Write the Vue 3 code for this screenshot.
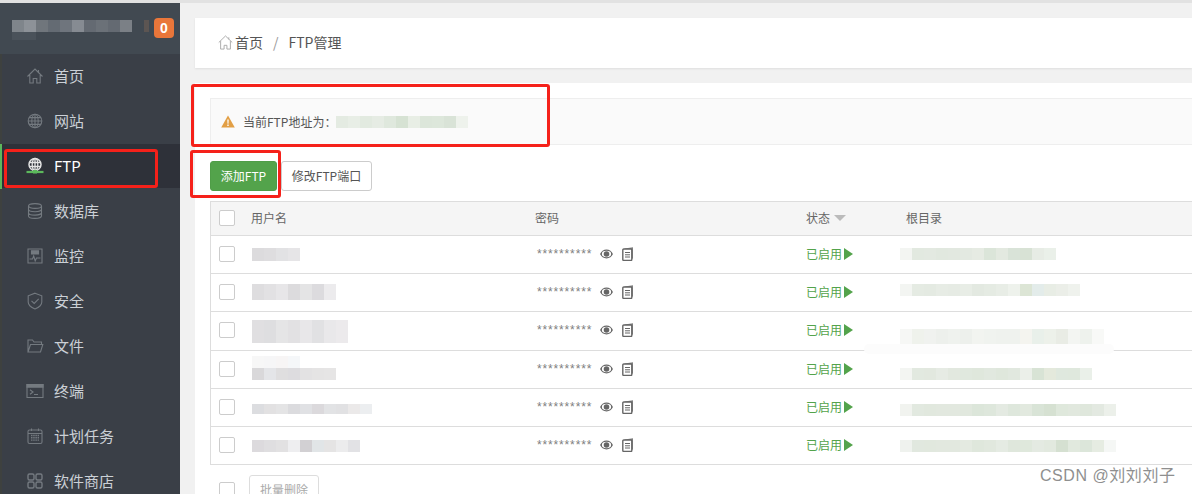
<script setup>
const navItems = [
  { name: '首页', icon: 'home' },
  { name: '网站', icon: 'globe' },
  { name: 'FTP', icon: 'ftp', active: true },
  { name: '数据库', icon: 'db' },
  { name: '监控', icon: 'monitor' },
  { name: '安全', icon: 'shield' },
  { name: '文件', icon: 'folder' },
  { name: '终端', icon: 'terminal' },
  { name: '计划任务', icon: 'calendar' },
  { name: '软件商店', icon: 'apps' },
]
const brandCells = ['#7f858b', '#8d9298', '#70767c', '#646b73', '#6f757d', '#868b92', '#646a72', '#6b7178', '#646a72', '#7b8086']
const addressCells = ['#e4ebe2', '#e8eee6', '#e2eae0', '#e6ece4', '#dfe8dd', '#d6e2d3', '#e8eee5', '#dce6da', '#dde7db', '#d9e3d7', '#eef2ec']
const rows = [
  {
    h: 38, pad: 2, nameTop: 12, nameH: 13, pathTop: 12, pathH: 12,
    name: ['#dcdbdd', '#dedddf', '#e2e2e4', '#e6e5e7'],
    path: ['#f3f5f2', '#e2e9e0', '#e3e9e1', '#e1e8df', '#e2e8e0', '#e3e9e1', '#e6ebe3', '#dbe5d9', '#e3e9e0', '#d9e3d8', '#d8e2d5', '#e7ece5', '#eaf0e9'],
  },
  {
    h: 38, pad: 2, nameTop: 10, nameH: 16, pathTop: 10, pathH: 12,
    name: ['#dedddf', '#e2e1e3', '#e7e6e8', '#dcdbdd', '#e4e4e5', '#dcdbde', '#ecebed'],
    path: ['#f3f5f2', '#e5ebe3', '#e4eae2', '#e7ece5', '#e6ebe4', '#e8ede6', '#e3e9e1', '#e5ebe3', '#e8ede6', '#eef2ec', '#dce5d5', '#e3ecea', '#e8ede5', '#ebeee8', '#eff2ed'],
  },
  {
    h: 39, pad: 3, nameTop: 8, nameH: 23, pathTop: 17, pathH: 15,
    name: ['#e0dfe1', '#dedee0', '#e5e5e6', '#e2e1e3', '#e8e7e9', '#e1e1e3', '#e9e8ea', '#eceaec'],
    path: ['#f6f7f5', '#eff2ec', '#f0f2ef', '#edf0ec', '#eff2ee', '#edf0ec', '#f2f4f0', '#f0f3ef', '#eff2ee', '#eff2ee', '#f4f4ef', '#e9f0ea', '#edf1ea', '#e9ece5', '#f3f5f2', '#eef2ed', '#f8f9f7'],
  },
  {
    h: 38, pad: 2, nameTop: 5, nameH: 12, pathTop: 17, pathH: 12,
    ghost: ['#f7f7f7', '#f6f6f7', '#f7f5f5', '#f5f7f9'],
    name: ['#d9d8da', '#e4e5e8', '#dfdedf', '#dddcdf', '#e3e2e3', '#e5e4e4', '#e6e5e5'],
    path: ['#f3f5f2', '#e2e9e0', '#e2e8df', '#e6ebe4', '#e2e8df', '#e0e8de', '#dfe7dc', '#e1e8df', '#dfe7dc', '#e1e8df', '#ebefe9', '#d8e3d5', '#e4e9dc', '#dfe8de', '#dfe8dd', '#eaf0e9'],
  },
  {
    h: 38, pad: 2, nameTop: 15, nameH: 10, pathTop: 15, pathH: 12,
    name: ['#dcdde0', '#e2e1e2', '#e4e4e5', '#dbdbde', '#e0e1e4', '#dbd9dc', '#e2e3e5', '#e1e1e3', '#ebe9e9', '#eceef0'],
    path: ['#f1f3ef', '#e2e9e0', '#e1e8de', '#e2e8df', '#e2e8df', '#e1e8de', '#dce6da', '#dee7dc', '#e4eae2', '#dee7dc', '#e2e9df', '#d9e4d7', '#d6e1d2', '#dfe8dc', '#e1e8de', '#dfe7dc', '#e3e9e1', '#ecf0ea'],
  },
  {
    h: 38, pad: 2, nameTop: 13, nameH: 12, pathTop: 13, pathH: 12,
    name: ['#dcdadd', '#dfdee0', '#e2e1e2', '#eeeef0', '#d2d0d3', '#e1e5e7', '#e5e4e4', '#ececed', '#e2e2e5'],
    path: ['#eff2ee', '#e1e8df', '#e1e8de', '#e2e8df', '#e2e8df', '#e4eae1', '#dfe7dc', '#e1e8de', '#e5ebe3', '#dfe7dc', '#dfe8dc', '#e4eae2', '#e2e9df', '#d5e0d1', '#e1e9de', '#dce6da', '#e6ece2', '#f5f7f5'],
  },
]
</script>

<template>
  <div class="page">
    <aside class="sidebar">
      <div class="brand">
        <div class="brand-blur">
          <div class="brand-cells">
            <i v-for="(c, i) in brandCells" :key="i" :style="{ background: c }"></i>
          </div>
          <div class="brand-under"></div>
        </div>
        <i class="brand-tail"></i>
        <span class="badge">0</span>
      </div>
      <nav class="nav">
        <a v-for="item in navItems" :key="item.name" class="nav-item" :class="{ active: item.active }">
          <svg class="nav-icon" viewBox="0 0 18 18" fill="none" stroke="currentColor" stroke-width="1.1">
            <template v-if="item.icon === 'home'">
              <path d="M1.500 9.500 9 2l7.500 7.500M3.800 8v8h3.400v-4.500h3.600V16h3.400V8M12.500 3v2.800" />
            </template>
            <template v-else-if="item.icon === 'globe'">
              <circle cx="9" cy="9" r="6.800" />
              <ellipse cx="9" cy="9" rx="3.200" ry="6.800" />
              <path d="M9 2.200v13.600M2.200 9h13.600M3 5.600h12M3 12.400h12" />
            </template>
            <template v-else-if="item.icon === 'ftp'">
              <g stroke="#e4e4e4" stroke-width="1.300">
                <circle cx="9" cy="7.500" r="6" stroke-width="1.500" />
                <ellipse cx="9" cy="7.500" rx="2.800" ry="6" />
                <path d="M9 1.500v12M3 5.500h12M3 9.500h12" />
              </g>
              <path d="M.5 15h17" stroke="#5cb85c" stroke-width="2.200" />
              <path d="M7 13h4v3.500H7z" fill="#5cb85c" stroke="none" />
            </template>
            <template v-else-if="item.icon === 'db'">
              <ellipse cx="9" cy="4" rx="6.500" ry="2.400" />
              <path d="M2.500 4v10c0 1.300 2.900 2.400 6.500 2.400s6.500-1.100 6.500-2.400V4M2.500 7.300c0 1.300 2.900 2.400 6.500 2.400s6.500-1.100 6.500-2.400M2.500 10.700c0 1.300 2.900 2.400 6.500 2.400s6.500-1.100 6.500-2.400" />
            </template>
            <template v-else-if="item.icon === 'monitor'">
              <path d="M2 2h14v14H2z" />
              <path d="M5.500 3.800h7v3.200h-7z" fill="currentColor" />
              <path d="M3.500 12h3l1.200-3 1.500 5 1.300-3h4" />
            </template>
            <template v-else-if="item.icon === 'shield'">
              <path d="M9 1.200 15.800 3.800v6.200c0 3.500-3.400 5.600-6.800 7-3.400-1.400-6.800-3.500-6.800-7V3.800z" />
              <path d="m5.500 8.800 2.700 2.700 4.500-4.700" />
            </template>
            <template v-else-if="item.icon === 'folder'">
              <path d="M2 15V3h4.500L8 5h7.500v2.500M2 15l2.500-7.500h12.300L14.500 15z" />
            </template>
            <template v-else-if="item.icon === 'terminal'">
              <path d="M1 2.500h16v13H1z" />
              <path d="M1 2.500h16v2.600H1z" fill="currentColor" />
              <path d="m4 7.800 3 2.200-3 2.200M8 12.500h4" />
            </template>
            <template v-else-if="item.icon === 'calendar'">
              <rect x="2" y="3" width="14" height="13.500" rx="1.500" />
              <path d="M2 6.500h14M5.500 1.500v2.500M12.500 1.500v2.500" />
              <path d="M5 8.500h8M5 10.800h8M5 13.100h8" stroke-width="1.400" stroke-dasharray="1.500 .7" />
            </template>
            <template v-else>
              <rect x="2" y="2" width="6" height="6" rx="1.500" stroke-width="1.400" />
              <rect x="10" y="2" width="6" height="6" rx="1.500" stroke-width="1.400" />
              <rect x="2" y="10" width="6" height="6" rx="1.500" stroke-width="1.400" />
              <rect x="10" y="10" width="6" height="6" rx="1.500" stroke-width="1.400" />
            </template>
          </svg>
          <span>{{ item.name }}</span>
        </a>
      </nav>
    </aside>

    <main class="content">
      <div class="crumbs">
        <svg class="crumb-home" viewBox="0 0 16 16" fill="none" stroke="#a9a9a9" stroke-width="1">
          <path d="M.8 8 8 1 15.200 8M2.800 6.500v8.500h3.700v-4h3v4h3.700V6.500M11.500 2.500v2.200" />
        </svg>
        <span class="crumb-first">首页</span>
        <span class="crumb-sep">/</span>
        <span class="crumb-current">FTP管理</span>
      </div>

      <section class="panel">
        <div class="notice">
          <svg class="warn" viewBox="0 0 14 13">
            <path d="M7 .5 13.800 12.500H.2z" fill="#e29f45" />
            <path d="M6.300 4.500h1.400l-.2 4.300h-1zM6.300 9.600h1.400v1.400H6.300z" fill="#fff" />
          </svg>
          <span class="notice-label">当前FTP地址为：</span>
          <div class="mosaic">
            <i v-for="(c, i) in addressCells" :key="i" :style="{ background: c, height: '12px' }"></i>
          </div>
        </div>

        <div class="actions">
          <button class="btn primary"><span>添加FTP</span></button>
          <button class="btn"><span>修改FTP端口</span></button>
        </div>

        <div class="table">
          <div class="row head">
            <span class="check"></span>
            <span>用户名</span>
            <span>密码</span>
            <span class="status-head">状态<i class="caret"></i></span>
            <span class="root-head">根目录</span>
          </div>
          <div v-for="(row, r) in rows" :key="r" class="row" :style="{ height: row.h + 'px', paddingBottom: row.pad + 'px' }">
            <span class="check"></span>
            <div class="blur-cell" :style="{ marginTop: row.nameTop + 'px' }">
              <div v-if="row.ghost" class="mosaic">
                <i v-for="(c, i) in row.ghost" :key="i" :style="{ background: c, height: '12px' }"></i>
              </div>
              <div class="mosaic">
                <i v-for="(c, i) in row.name" :key="i" :style="{ background: c, height: row.nameH + 'px' }"></i>
              </div>
            </div>
            <div class="pwd">
              <span class="stars">**********</span>
              <svg class="eye" viewBox="0 0 14 10">
                <path d="M7 .2C10 .2 12.800 2.300 13.900 5 12.800 7.700 10 9.800 7 9.800S1.200 7.700.1 5C1.200 2.300 4 .2 7 .2z" fill="#666" />
                <ellipse cx="7" cy="5" rx="5" ry="3.400" fill="#fff" />
                <circle cx="7" cy="5" r="3" fill="#666" />
              </svg>
              <svg class="copy" viewBox="0 0 12 14">
                <path d="M2.500 1.500 11 .3v11l-1 .8z" fill="#808080" />
                <rect x=".8" y="2" width="9" height="11.500" rx="1" fill="#fff" stroke="#666" stroke-width="1.400" />
                <path d="M3 5.500h5M3 7.800h5M3 10h5" stroke="#666" />
              </svg>
            </div>
            <div class="status">已启用<i class="play"></i></div>
            <div class="blur-cell" :style="{ marginTop: row.pathTop + 'px' }">
              <div class="mosaic">
                <i v-for="(c, i) in row.path" :key="i" :style="{ background: c, height: row.pathH + 'px' }"></i>
              </div>
            </div>
          </div>
        </div>

        <div class="batch">
          <span class="check"></span>
          <button class="btn ghost">批量删除</button>
        </div>
      </section>
    </main>

    <div class="mark mark-notice"></div>
    <div class="mark mark-add"></div>
    <div class="mark mark-nav"></div>
    <div class="smear"></div>
    <div class="watermark">CSDN @刘刘刘子</div>
  </div>
</template>

<style>
html, body { margin: 0; background: #fff; overflow: hidden; }
</style>

<style scoped>
.page {
  position: relative;
  display: flex;
  width: 1192px;
  height: 494px;
  overflow: hidden;
  padding-top: 3px;
  box-sizing: border-box;
  background: #e2e2e2;
  font-family: "Noto Sans CJK SC", "Liberation Sans", sans-serif;
  color: #555;
}
.sidebar {
  flex: 0 0 180px;
  background: #3a3f47;
  color: #c9ced3;
}
.brand {
  display: flex;
  align-items: flex-start;
  height: 51px;
  padding: 15px 0 0 12px;
  box-sizing: border-box;
  background: #414951;
}
.brand-blur { width: 120px; padding-top: 2px; }
.brand-cells { display: flex; height: 12px; }
.brand-cells i { flex: 0 0 12px; height: 12px; }
.brand-under { width: 24px; height: 8px; background: #4a525a; }
.brand-tail {
  width: 5px;
  height: 12px;
  margin: 2px 0 0 12px;
  background: #5c5552;
}
.badge {
  margin-left: 5px;
  width: 20px;
  height: 20px;
  border-radius: 4px;
  background: #e9763a;
  color: #fff;
  font: bold 14px/20px "Liberation Sans", sans-serif;
  text-align: center;
}
.nav-item {
  display: flex;
  align-items: center;
  height: 45px;
  padding: 0 0 2px 26px;
  box-sizing: border-box;
  font-size: 15px;
  color: #cbd0d6;
  border-left: 2px solid #3e413f;
}
.nav-item.active {
  background: #2e3139;
  border-left-color: #5cb85c;
  color: #fff;
  box-shadow: inset 0 -1px 0 #3a3f47;
}
.nav-icon {
  flex: 0 0 18px;
  width: 18px;
  height: 18px;
  margin-left: -2px;
  margin-right: 10px;
  color: #747a80;
}
.content {
  flex: 1;
  min-width: 0;
  padding: 15px 0 0 15px;
  background: #f1f1f1;
}
.crumbs {
  display: flex;
  align-items: center;
  height: 50px;
  padding: 0 0 2px 23px;
  box-sizing: border-box;
  background: #fff;
  font-size: 14px;
  box-shadow: 0 1px 2px rgba(0, 0, 0, .08);
}
.crumb-home { width: 15px; height: 15px; margin-right: 2px; }
.crumb-sep { margin: 0 10px; color: #999; }
.crumb-current { color: #555; }
.panel {
  margin-top: 15px;
  height: 420px;
  padding: 15px 0 0 15px;
  background: #fff;
}
.notice {
  display: flex;
  align-items: center;
  height: 47px;
  padding-left: 10px;
  font-size: 12px;
  color: #555;
  background: #fafafa;
  border: 1px solid #eee;
  border-width: 1px 0 1px 1px;
  box-sizing: border-box;
}
.warn { width: 14px; height: 13px; margin-right: 8px; }
.notice-label { flex: 0 0 93px; white-space: nowrap; }
.mosaic { display: flex; }
.mosaic i { flex: 0 0 12px; }
.blur-cell { align-self: start; }
.actions {
  display: flex;
  gap: 4px;
  height: 30px;
  margin-top: 16px;
  margin-bottom: 10px;
}
.btn {
  width: 91px;
  height: 30px;
  padding: 0 0 2px;
  font: 12px "Noto Sans CJK SC", "Liberation Sans", sans-serif;
  color: #555;
  background: #fff;
  border: 1px solid #ccc;
  border-radius: 3px;
}
.btn.primary {
  width: 67px;
  background: #53a34b;
  border-color: #4f9d47;
  color: #fff;
}
.btn.ghost { width: 70px; color: #aaa; border-color: #ddd; }
.table {
  border: 1px solid #ddd;
  border-width: 1px 0 0 1px;
}
.row {
  display: grid;
  grid-template-columns: 41px 283px 271px 94px 1fr;
  align-items: center;
  height: 38px;
  padding-bottom: 2px;
  font-size: 12px;
  border-bottom: 1px solid #ddd;
  box-sizing: border-box;
}
.row.head {
  height: 34px;
  background: #f5f5f5;
  color: #666;
}
.check {
  display: block;
  width: 16px;
  height: 16px;
  margin-left: 8px;
  box-sizing: border-box;
  background: #fff;
  border: 1px solid #ccc;
  border-radius: 2px;
}
.head > span:nth-child(2) { margin-left: -1px; }
.status-head { display: flex; align-items: center; }
.caret {
  width: 0;
  height: 0;
  margin-left: 4px;
  border: 6px solid transparent;
  border-top: 6px solid #bbb;
  border-bottom: 0;
}
.root-head { padding-left: 6px; }
.pwd { display: flex; align-items: center; padding-left: 2px; }
.stars {
  width: 63px;
  font: 12px/14px "Liberation Sans", sans-serif;
  color: #808080;
  letter-spacing: .85px;
}
.eye { width: 13px; height: 10px; margin-right: 9px; }
.copy { width: 12px; height: 14px; }
.status { display: flex; align-items: center; color: #53a34b; }
.play {
  width: 0;
  height: 0;
  margin-left: 2px;
  border-left: 9px solid #53a34b;
  border-top: 6px solid transparent;
  border-bottom: 6px solid transparent;
}
.batch {
  display: flex;
  align-items: center;
  gap: 14px;
  margin-top: 10px;
}
.batch .check { margin-left: 9px; }
.mark {
  position: absolute;
  border: 3px solid #f5211a;
  border-radius: 3px;
  box-sizing: border-box;
}
.mark-notice { left: 191px; top: 84px; width: 359px; height: 63px; }
.mark-add { left: 190px; top: 150px; width: 91px; height: 48px; }
.mark-nav { left: 4px; top: 149px; width: 154px; height: 39px; }
.smear {
  position: absolute;
  left: 864px;
  top: 344px;
  width: 250px;
  height: 10px;
  border-radius: 5px;
  background: #fcfcfc;
}
.watermark {
  position: absolute;
  left: 1040px;
  top: 465px;
  font: 16px/22px "Liberation Sans", "Noto Sans CJK SC", sans-serif;
  color: #8f8f8f;
  letter-spacing: .55px;
}
</style>
